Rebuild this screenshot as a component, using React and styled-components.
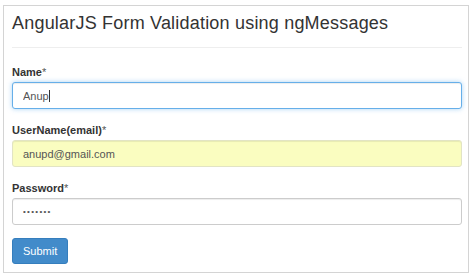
import React from "react";
import styled, { createGlobalStyle } from "styled-components";

const GlobalStyle = createGlobalStyle`
  html, body {
    margin: 0;
    padding: 0;
    background: #fff;
  }
  body {
    font-family: "Liberation Sans", Arial, sans-serif;
    color: #333;
  }
  * {
    box-sizing: border-box;
  }
`;

const Panel = styled.div`
  width: 466px;
  margin: 5px 0 0 3px;
  border: 1px solid #d4d4d4;
  padding: 6px 6px 8px 8px;
`;

const Title = styled.h1`
  margin: 0;
  font-size: 18px;
  line-height: 22px;
  font-weight: 400;
  letter-spacing: 0.2px;
  color: #333;
`;

const Divider = styled.hr`
  margin: 13px 0 17px;
  border: 0;
  border-top: 1px solid #eee;
  height: 0;
`;

const Group = styled.div`
  margin-bottom: ${(p) => (p.last ? "13px" : "14px")};
`;

const Label = styled.label`
  display: block;
  font-size: 11px;
  line-height: 15px;
  font-weight: 700;
  color: #333;
  margin-bottom: 2px;
`;

const Star = styled.span`
  font-weight: 400;
  color: #555;
`;

const Field = styled.div`
  position: relative;
`;

const Input = styled.input`
  display: block;
  width: 100%;
  height: 27px;
  padding: 0 10px;
  font-family: "Liberation Sans", Arial, sans-serif;
  font-size: 11px;
  color: #555;
  background: ${(p) => (p.autofill ? "#fafdc0" : "#fff")};
  border: 1px solid ${(p) => (p.focused ? "#66afe9" : p.autofill ? "#e2e4c4" : "#ccc")};
  border-radius: 3px;
  outline: none;
  box-shadow: ${(p) =>
    p.focused
      ? "inset 0 1px 1px rgba(0,0,0,.075), 0 0 5px rgba(102,175,233,.55)"
      : "inset 0 1px 1px rgba(0,0,0,.075)"};

  &[type="password"] {
    font-size: 8px;
    letter-spacing: 1.3px;
  }
`;

const Caret = styled.span`
  position: absolute;
  left: 37px;
  top: 8px;
  width: 1px;
  height: 12px;
  background: #333;
`;

const SubmitButton = styled.button`
  display: block;
  height: 26px;
  padding: 0 10px;
  font-family: "Liberation Sans", Arial, sans-serif;
  font-size: 11px;
  color: #fff;
  background: #428bca;
  border: 1px solid #357ebd;
  border-radius: 3px;
  cursor: pointer;
`;

export default function App() {
  return (
    <>
      <GlobalStyle />
      <Panel>
        <Title>AngularJS Form Validation using ngMessages</Title>
        <Divider />
        <form onSubmit={(e) => e.preventDefault()}>
          <Group>
            <Label>
              Name<Star>*</Star>
            </Label>
            <Field>
              <Input focused defaultValue="Anup" />
              <Caret />
            </Field>
          </Group>
          <Group>
            <Label>
              UserName(email)<Star>*</Star>
            </Label>
            <Input autofill defaultValue="anupd@gmail.com" />
          </Group>
          <Group last>
            <Label>
              Password<Star>*</Star>
            </Label>
            <Input type="password" defaultValue="1234567" />
          </Group>
          <SubmitButton type="submit">Submit</SubmitButton>
        </form>
      </Panel>
    </>
  );
}
